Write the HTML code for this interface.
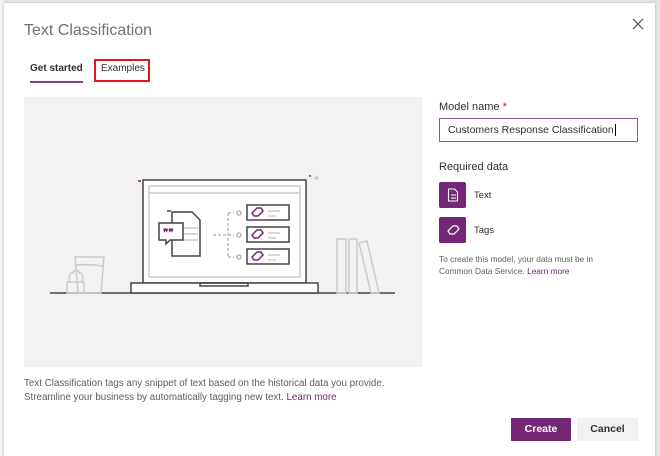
<!DOCTYPE html><html><head><style>
body{margin:0;width:660px;height:456px;background:#e8e8e8;font-family:"Liberation Sans",sans-serif;position:relative;overflow:hidden}
.a{position:absolute}
</style></head><body>
<div class="a" style="left:0;top:0;width:4px;height:456px;background:#f4f4f4"></div>
<div class="a" style="left:4px;top:3px;width:651px;height:453px;background:#fff;box-shadow:0 0 3px rgba(0,0,0,.25)"></div>
<div class="a" style="left:24px;top:22px;font-size:16px;color:#707070">Text Classification</div>
<svg class="a" style="left:632px;top:18px" width="12" height="12"><path d="M1 1L11 11M11 1L1 11" stroke="#555" stroke-width="1.2"/></svg>
<div class="a" style="left:30px;top:63px;font-size:10px;font-weight:bold;color:#323130">Get started</div>
<div class="a" style="left:30px;top:81px;width:53px;height:2px;background:#8a3d92"></div>
<div class="a" style="left:94px;top:59px;width:52px;height:19px;border:2px solid #e81123"></div>
<div class="a" style="left:101px;top:63px;font-size:10px;color:#323130">Examples</div>
<svg class="a" style="left:24px;top:97px" width="398" height="270">
<rect width="398" height="270" fill="#f3f2f1"/>
<g transform="translate(-24,-97)" fill="none" stroke-width="1.5">
<line x1="50" y1="293" x2="395" y2="293" stroke="#444"/>
<rect x="143" y="180" width="163" height="103" stroke="#444" fill="#fff"/>
<rect x="149" y="186" width="151" height="91" stroke="#ccc"/>
<line x1="149" y1="193" x2="300" y2="193" stroke="#ccc"/>
<rect x="131" y="283" width="187" height="10" stroke="#444" fill="#fff"/>
<rect x="200" y="283" width="48" height="3" stroke="#444"/>
<path d="M172 212h20l8 8v36h-28z" stroke="#444" fill="#fff"/>
<path d="M167 211h4" stroke="#444"/>
<line x1="180" y1="228" x2="198" y2="228" stroke="#ccc"/><line x1="180" y1="234" x2="198" y2="234" stroke="#ccc"/><line x1="180" y1="240" x2="198" y2="240" stroke="#ccc"/>
<path d="M159 223h24v17h-13l-4 4v-4h-7z" stroke="#444" fill="#fff"/>
<text x="163" y="236" font-size="10" font-weight="bold" fill="#742774" stroke="none">❞❞</text>
<path d="M213 235h18M228 213v44M228 213h6M228 235h6M228 257h6" stroke="#bbb" stroke-dasharray="3 2"/>
<circle cx="239" cy="213" r="2" stroke="#bbb"/><circle cx="239" cy="235" r="2" stroke="#bbb"/><circle cx="239" cy="257" r="2" stroke="#bbb"/>
<rect x="247" y="205" width="42" height="15" stroke="#444" fill="#fff"/>
<rect x="247" y="227" width="42" height="15" stroke="#444" fill="#fff"/>
<rect x="247" y="249" width="42" height="15" stroke="#444" fill="#fff"/>
<path d="M252 213l5-5h4l2 3-5 5h-4zM252 235l5-5h4l2 3-5 5h-4zM252 257l5-5h4l2 3-5 5h-4z" stroke="#742774"/>
<path d="M268 211h12M268 216h8M268 233h12M268 238h8M268 255h12M268 260h8" stroke="#ccc"/>
<path d="M138 181h3" stroke="#742774"/><path d="M310 175v2" stroke="#742774"/><path d="M314 178h5M316.5 175.5v5" stroke="#ccc"/>
<rect x="337" y="239" width="9" height="54" stroke="#ccc"/><rect x="349" y="239" width="8" height="54" stroke="#ccc"/>
<path d="M359 243l8-2 12 52h-8z" stroke="#ccc"/>
<path d="M75 257h29l-3 36h-23zM76 265q14 -1 27 1" stroke="#ccc"/>
<rect x="67" y="282" width="17" height="11" stroke="#ccc"/>
<path d="M70 282c-2-5 0-10 3-9 1-4 5-4 6 0 3-1 5 4 3 9" stroke="#ccc"/>
</g></svg>
<div class="a" style="left:439px;top:101px;font-size:11px;color:#323130">Model name <span style="color:#a4262c">*</span></div>
<div class="a" style="left:439px;top:118px;width:197px;height:22px;border:1px solid #8a5c8f"></div>
<div class="a" style="left:448px;top:124px;font-size:10.5px;color:#323130">Customers Response Classification<span style="border-left:1px solid #000;margin-left:1px"></span></div>
<div class="a" style="left:439px;top:161px;font-size:11px;color:#323130">Required data</div>
<div class="a" style="left:439px;top:182px;width:27px;height:26px;background:#742774;border-radius:2px"></div>
<svg class="a" style="left:447px;top:188px" width="12" height="14"><path d="M1.5 1h6l3 3v9h-9z M4 7h5M4 10h5" fill="none" stroke="#fff" stroke-width="1.1"/></svg>
<div class="a" style="left:474px;top:190px;font-size:9.5px;color:#323130">Text</div>
<div class="a" style="left:439px;top:217px;width:27px;height:26px;background:#742774;border-radius:2px"></div>
<svg class="a" style="left:446px;top:223px" width="14" height="14"><path d="M2 8l5-5h4l2 3-5 5h-4z" fill="none" stroke="#fff" stroke-width="1.2"/></svg>
<div class="a" style="left:474px;top:225px;font-size:9.5px;color:#323130">Tags</div>
<div class="a" style="left:439px;top:253px;font-size:8.3px;line-height:12px;color:#605e5c">To create this model, your data must be in<br>Common Data Service. <span style="color:#742774">Learn more</span></div>
<div class="a" style="left:24px;top:377px;font-size:9.8px;line-height:14px;color:#605e5c">Text Classification tags any snippet of text based on the historical data you provide.<br>Streamline your business by automatically tagging new text. <span style="color:#742774">Learn more</span></div>
<div class="a" style="left:511px;top:418px;width:60px;height:23px;background:#742774;color:#fff;font-size:10.5px;font-weight:bold;text-align:center;line-height:23px">Create</div>
<div class="a" style="left:577px;top:418px;width:61px;height:23px;background:#f3f2f1;color:#323130;font-size:10.5px;font-weight:bold;text-align:center;line-height:23px">Cancel</div>
</body></html>
